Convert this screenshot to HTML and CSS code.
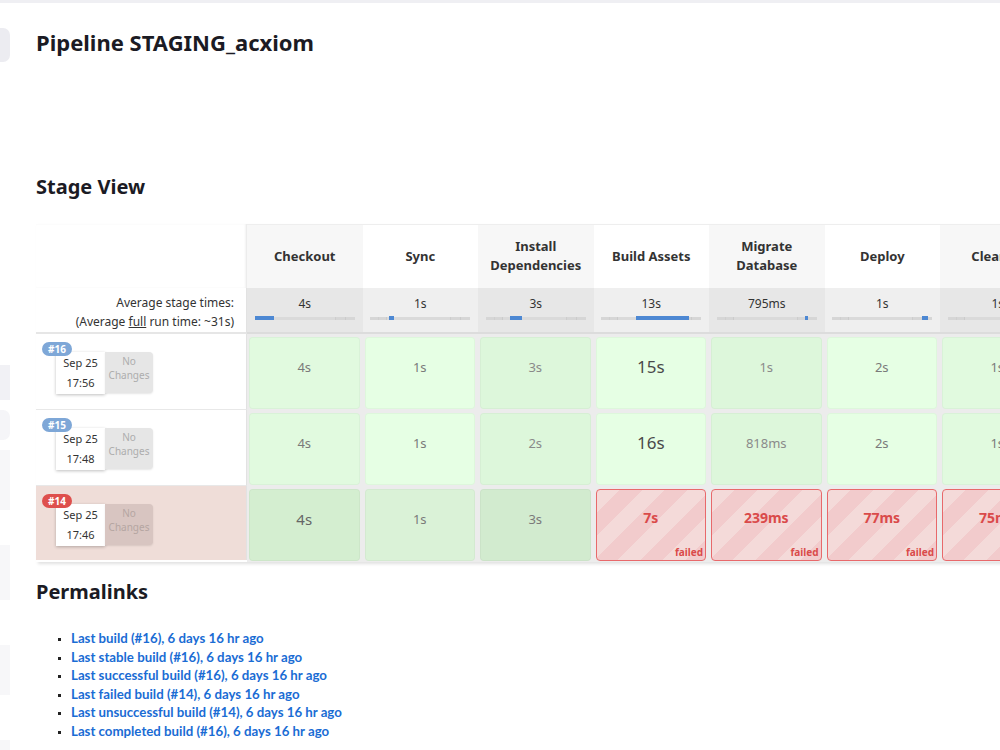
FILE: index.html
```html
<!DOCTYPE html>
<html>
<head>
<meta charset="utf-8">
<link rel="stylesheet" href="styles.css">
</head>
<body>
<div class="topbar"></div>
<div class="page">
  <aside class="sidebar">
    <div class="sb sb1"></div>
    <div class="sb sb2"></div>
    <div class="sb sb3"></div>
    <div class="sb sb4"></div>
    <div class="sb sb5"></div>
    <div class="sb sb6"></div>
    <div class="sb sb7"></div>
  </aside>
  <main class="main">
    <h1 class="title">Pipeline STAGING_acxiom</h1>
    <h2 class="section">Stage View</h2>

    <div class="stage-table">
      <!-- header row -->
      <div class="lbl lbl-head"></div>
      <div class="th alt">Checkout</div>
      <div class="th">Sync</div>
      <div class="th alt">Install<br>Dependencies</div>
      <div class="th">Build Assets</div>
      <div class="th alt">Migrate<br>Database</div>
      <div class="th">Deploy</div>
      <div class="th alt">Cleanup</div>

      <!-- average row -->
      <div class="lbl lbl-avg">Average stage times:<br>(Average <u>full</u> run time: ~31s)</div>
      <div class="avg alt"><span>4s</span><div class="bar"><i style="left:0;width:19px"></i></div></div>
      <div class="avg"><span>1s</span><div class="bar"><i style="left:19px;width:5px"></i></div></div>
      <div class="avg alt"><span>3s</span><div class="bar"><i style="left:24px;width:12px"></i></div></div>
      <div class="avg"><span>13s</span><div class="bar"><i style="left:35px;width:53px"></i></div></div>
      <div class="avg alt"><span>795ms</span><div class="bar"><i style="left:88px;width:3px"></i></div></div>
      <div class="avg"><span>1s</span><div class="bar"><i style="left:90px;width:6px"></i></div></div>
      <div class="avg alt"><span>1s</span><div class="bar"><i style="left:96px;width:4px"></i></div></div>

      <!-- build 16 -->
      <div class="lbl build">
        <span class="badge">#16</span>
        <div class="when"><span>Sep 25</span><span>17:56</span></div>
        <div class="changes">No<br>Changes</div>
      </div>
      <div class="cellwrap"><div class="cell ok c1">4s</div></div>
      <div class="cellwrap"><div class="cell ok c2">1s</div></div>
      <div class="cellwrap"><div class="cell ok c1 light">3s</div></div>
      <div class="cellwrap"><div class="cell ok c2 big">15s</div></div>
      <div class="cellwrap"><div class="cell ok c1 light">1s</div></div>
      <div class="cellwrap"><div class="cell ok c2">2s</div></div>
      <div class="cellwrap"><div class="cell ok c1">1s</div></div>

      <!-- build 15 -->
      <div class="lbl build">
        <span class="badge">#15</span>
        <div class="when"><span>Sep 25</span><span>17:48</span></div>
        <div class="changes">No<br>Changes</div>
      </div>
      <div class="cellwrap"><div class="cell ok c1">4s</div></div>
      <div class="cellwrap"><div class="cell ok c2">1s</div></div>
      <div class="cellwrap"><div class="cell ok c1 light">2s</div></div>
      <div class="cellwrap"><div class="cell ok c2 big">16s</div></div>
      <div class="cellwrap"><div class="cell ok c1 light">818ms</div></div>
      <div class="cellwrap"><div class="cell ok c2">2s</div></div>
      <div class="cellwrap"><div class="cell ok c1">1s</div></div>

      <!-- build 14 -->
      <div class="lbl build failed-row">
        <span class="badge red">#14</span>
        <div class="when"><span>Sep 25</span><span>17:46</span></div>
        <div class="changes">No<br>Changes</div>
      </div>
      <div class="cellwrap"><div class="cell ok f1 mid">4s</div></div>
      <div class="cellwrap"><div class="cell ok f2">1s</div></div>
      <div class="cellwrap"><div class="cell ok f1 light">3s</div></div>
      <div class="cellwrap"><div class="cell fail">7s<em>failed</em></div></div>
      <div class="cellwrap"><div class="cell fail">239ms<em>failed</em></div></div>
      <div class="cellwrap"><div class="cell fail">77ms<em>failed</em></div></div>
      <div class="cellwrap"><div class="cell fail">75ms<em>failed</em></div></div>
    </div>

    <h2 class="section perm">Permalinks</h2>
    <ul class="links">
      <li><a href="#">Last build (#16), 6 days 16 hr ago</a></li>
      <li><a href="#">Last stable build (#16), 6 days 16 hr ago</a></li>
      <li><a href="#">Last successful build (#16), 6 days 16 hr ago</a></li>
      <li><a href="#">Last failed build (#14), 6 days 16 hr ago</a></li>
      <li><a href="#">Last unsuccessful build (#14), 6 days 16 hr ago</a></li>
      <li><a href="#">Last completed build (#16), 6 days 16 hr ago</a></li>
    </ul>
  </main>
</div>
</body>
</html>
```

FILE: styles.css
```css
html, body {
  margin: 0;
  padding: 0;
  overflow: hidden;
  background: #fff;
  width: 1000px;
  height: 750px;
}
body {
  font-family: "Noto Sans", "Open Sans", sans-serif;
  color: #1b1b24;
}
.topbar {
  height: 3px;
  background: #efeff3;
}
.page {
  display: flex;
}
.sidebar {
  width: 10px;
  flex: none;
  display: flex;
  flex-direction: column;
}
.sb {
  background: #f3f3f6;
  border-radius: 0 7px 7px 0;
}
.sb1 { margin-top: 25px; height: 34px; background: #ececf1; }
.sb2 { margin-top: 303px; height: 35px; background: #f1f1f5; border-radius: 0; }
.sb3 { margin-top: 10px; height: 30px; background: #f5f5f8; }
.sb4 { margin-top: 10px; height: 60px; background: #f7f7f9; border-radius: 0; }
.sb5 { margin-top: 35px; height: 55px; background: #f7f7f9; border-radius: 0; }
.sb6 { margin-top: 45px; height: 50px; background: #f7f7f9; border-radius: 0; }
.sb7 { margin-top: 45px; height: 20px; background: #f7f7f9; border-radius: 0; }

.main {
  padding-left: 26px;
  flex: none;
  width: 1100px;
}
.title {
  margin: 25px 0 0;
  font-size: 22px;
  line-height: 28px;
  font-weight: 700;
}
.section {
  margin: 118px 0 0;
  font-size: 20px;
  line-height: 26px;
  font-weight: 700;
}
.stage-table {
  margin-top: 24px;
  display: grid;
  grid-template-columns: 211px repeat(7, 115.5px);
  grid-template-rows: 64px 46px 76px 76px 76px;
  box-shadow: 2px 2px 3px rgba(0,0,0,0.12);
  width: max-content;
}
.lbl {
  background: #fff;
  border-right: 1px solid #e2e2e2;
  box-sizing: border-box;
}
.lbl-head { border-right: 1px solid #ececec; box-shadow: inset -1px 0 2px rgba(0,0,0,0.05); }
.lbl-avg {
  text-align: right;
  font-size: 12px;
  line-height: 19px;
  color: #333;
  padding: 5px 12px 0 0;
  border-bottom: 2px solid #e6e6e6;
}
.lbl-avg u { text-decoration: underline; }
.th {
  display: flex;
  align-items: center;
  justify-content: center;
  text-align: center;
  font-size: 13px;
  font-weight: 700;
  line-height: 19px;
  color: #333;
  background: #fff;
  box-shadow: inset 0 1px 0 #eee;
}
.th.alt { background: #f7f7f7; }
.avg {
  background: #efefef;
  display: flex;
  flex-direction: column;
  align-items: center;
  font-size: 12px;
  color: #333;
  padding-top: 7px;
  box-sizing: border-box;
  border-bottom: 2px solid #dcdcdc;
}
.avg.alt { background: #e7e7e7; }
.bar {
  position: relative;
  width: 100px;
  height: 3px;
  margin-top: 5px;
  background: linear-gradient(90deg, #d6d6d6 0 8%, #cfcfcf 8% 9%, #d6d6d6 9% 16%, #cbcbcb 16% 17%, #dadada 17% 80%, #cdcdcd 80% 81%, #d6d6d6 81% 90%, #cbcbcb 90% 91%, #d6d6d6 91%);
}
.bar i {
  position: absolute;
  top: -1px;
  height: 4px;
  background: #4d88d3;
}
.build {
  position: relative;
  display: flex;
  padding: 18px 0 0 20px;
  border-bottom: 1px solid #e8e8e8;
}
.build.failed-row { background: #efddd8; border-bottom: none; height: 74px; }
.badge {
  position: absolute;
  left: 6px;
  top: 8px;
  background: #7ea7d7;
  color: #fff;
  font-size: 10px;
  font-weight: 700;
  line-height: 14px;
  padding: 0 6px;
  border-radius: 8px;
  z-index: 1;
}
.badge.red { background: #de4f4c; }
.when {
  width: 49px;
  height: 42px;
  background: #fff;
  box-shadow: 0 1px 3px rgba(0,0,0,0.25);
  display: flex;
  flex-direction: column;
  align-items: center;
  font-size: 11px;
  line-height: 20px;
  padding-top: 1px;
  box-sizing: border-box;
  color: #333;
}
.changes {
  width: 48px;
  height: 41px;
  background: #e6e6e6;
  border-radius: 0 4px 4px 0;
  text-align: center;
  font-size: 10px;
  line-height: 14px;
  color: #adadad;
  padding-top: 2px;
  box-sizing: border-box;
  box-shadow: 0 1px 2px rgba(0,0,0,0.1);
}
.failed-row .changes { background: #d8c5c1; color: #b5a5a2; }
.cellwrap {
  background: #ececec;
  padding: 3px 3px 1px 2px;
}
.cell {
  height: 72px;
  box-sizing: border-box;
  border-radius: 4px;
  display: flex;
  align-items: center;
  justify-content: center;
  padding-bottom: 13px;
  font-size: 13px;
  color: #7a7a7a;
  position: relative;
}
.ok { border: 1px solid rgba(0,0,0,0.03); }
.c1 { background: #e1fadf; }
.c2 { background: #e6ffe4; }
.c1.light { background: #ddf7db; color: #8a8a8a; }
.f1 { background: #d4eed0; }
.f2 { background: #daf2d7; }
.f1.light { background: #d2ebcf; }
.big { font-size: 17px; color: #4a4a4a; }
.mid { font-size: 15px; color: #666; }
.fail {
  border: 1px solid #e8696b;
  background: repeating-linear-gradient(135deg, #f4dad9 0 16px, #f2cbcc 16px 32px);
  color: #da4a4a;
  font-weight: 700;
  font-size: 14px;
  padding-bottom: 15px;
}
.fail em {
  position: absolute;
  right: 2px;
  bottom: 1px;
  font-style: normal;
  font-size: 10px;
  line-height: 14px;
}
.perm { margin-top: 17px; }
.links {
  margin: 24px 0 0;
  padding-left: 35px;
  list-style: square;
  font-family: Lato, "Noto Sans", sans-serif;
  font-size: 13.25px;
  line-height: 18.6px;
  font-weight: 700;
}
.links li::marker { color: #222; font-size: 9px; }
.links a {
  color: #1a6cd4;
  text-decoration: none;
}
```
